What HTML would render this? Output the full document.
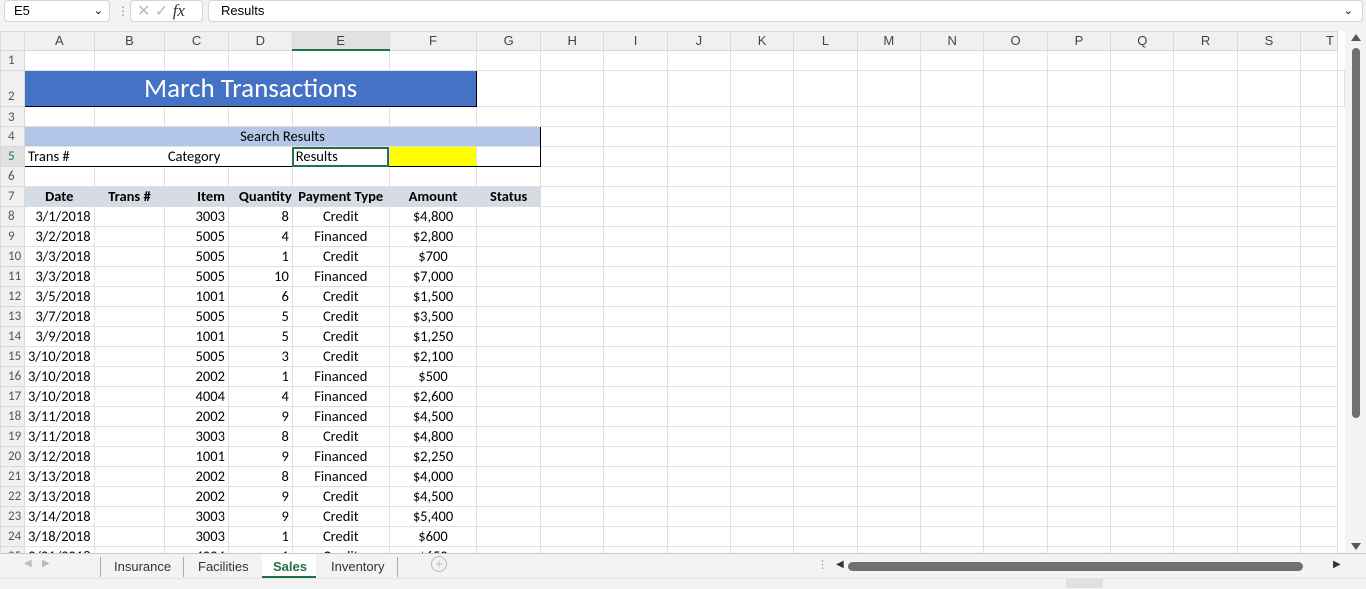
<!DOCTYPE html>
<html><head><style>
body{margin:0;width:1366px;height:588px;overflow:hidden;background:#f3f3f3;font-family:"Liberation Sans",Calibri,sans-serif;position:relative}
.fb{position:absolute;top:0;height:22px;background:#fff;border:1px solid #d6d6d6;border-radius:4px;box-sizing:border-box;font-size:13px;line-height:20px}
#grid{position:absolute;left:0;top:31px;width:1345px;height:522px;overflow:hidden;background:#fff}
table{border-collapse:collapse;table-layout:fixed;font-family:Carlito,"Liberation Sans",sans-serif;font-size:14.5px}
td{border:1px solid #e1e1e1;padding:0 3px;white-space:nowrap;overflow:hidden;height:19px;line-height:19px;color:#000}
tr.h td{background:#f0f0f0;text-align:center;color:#444;font-size:13px;border-color:#d9d9d9;height:17px;line-height:17px;font-family:"Liberation Sans",sans-serif}
td.rh{background:#f0f0f0;color:#555;font-size:13px;padding:0 0 0 7px;text-align:left;border-color:#d9d9d9;vertical-align:bottom}
.r{text-align:right}.c{text-align:center}
tr.hd td.d{background:#d6dce4;font-weight:bold;text-align:center;border-color:#d6dce4}
</style></head><body>
<div class="fb" style="left:4px;width:106px;padding-left:9px">E5<span style="position:absolute;right:6px;top:0;font-size:11px">&#8964;</span></div>
<div style="position:absolute;left:117px;top:4px;color:#888;font-size:12px">&#8942;</div>
<div class="fb" style="left:130px;width:73px;color:#bbb;font-size:16px;padding-left:6px">✕ ✓ <i style="color:#333;font-family:'Liberation Serif';font-size:17px">fx</i></div>
<div class="fb" style="left:208px;width:1155px;padding-left:12px">Results<span style="position:absolute;right:9px;top:0;font-size:11px">&#8964;</span></div>
<div id="grid"><table>
<colgroup><col style="width:24px"><col style="width:68px"><col style="width:71px"><col style="width:64px"><col style="width:64px"><col style="width:97px"><col style="width:88px"><col style="width:64px"><col span="12" style="width:64px"><col style="width:37px"></colgroup>
<tr class="h"><td style="background:#f0f0f0"></td><td>A</td><td>B</td><td>C</td><td>D</td><td style="background:#e1e1e1;border-bottom:2px solid #217346">E</td><td>F</td><td>G</td><td>H</td><td>I</td><td>J</td><td>K</td><td>L</td><td>M</td><td>N</td><td>O</td><td>P</td><td>Q</td><td>R</td><td>S</td><td style="text-align:right">T</td></tr>
<tr><td class="rh">1</td><td></td><td></td><td></td><td></td><td></td><td></td><td></td><td></td><td></td><td></td><td></td><td></td><td></td><td></td><td></td><td></td><td></td><td></td><td></td><td></td></tr>
<tr><td class="rh" style="height:35px">2</td><td colspan="6" style="background:#4472c4;color:#fff;font-size:27px;text-align:center;border:1px solid #000;height:35px;line-height:35px">March Transactions</td><td></td><td></td><td></td><td></td><td></td><td></td><td></td><td></td><td></td><td></td><td></td><td></td><td></td><td></td><td></td></tr>
<tr><td class="rh" style="height:17px;line-height:17px">3</td><td style="height:17px"></td><td></td><td></td><td></td><td></td><td></td><td></td><td></td><td></td><td></td><td></td><td></td><td></td><td></td><td></td><td></td><td></td><td></td><td></td><td></td></tr>
<tr><td class="rh">4</td><td colspan="7" style="background:#b4c6e7;text-align:center;border:1px solid #000;border-bottom:none">Search Results</td><td></td><td></td><td></td><td></td><td></td><td></td><td></td><td></td><td></td><td></td><td></td><td></td><td></td></tr>
<tr><td class="rh" style="background:#e1e1e1;color:#217346">5</td><td colspan="2" style="border-left:1px solid #000;border-bottom:1px solid #000;border-right:none">Trans #</td><td colspan="2" style="border-bottom:1px solid #000;border-left:none;border-right:none">Category</td><td style="outline:2px solid #217346;outline-offset:-2px;border-bottom:1px solid #000">Results</td><td style="background:#ffff00;border-bottom:1px solid #000"></td><td style="border-right:1px solid #000;border-bottom:1px solid #000"></td><td></td><td></td><td></td><td></td><td></td><td></td><td></td><td></td><td></td><td></td><td></td><td></td><td></td></tr>
<tr><td class="rh">6</td><td></td><td></td><td></td><td></td><td></td><td></td><td></td><td></td><td></td><td></td><td></td><td></td><td></td><td></td><td></td><td></td><td></td><td></td><td></td><td></td></tr>
<tr class="hd"><td class="rh">7</td><td class="d">Date</td><td class="d">Trans #</td><td class="d" style="text-align:right">Item</td><td class="d" style="text-align:right;padding:0">Quantity</td><td class="d">Payment Type</td><td class="d">Amount</td><td class="d">Status</td><td></td><td></td><td></td><td></td><td></td><td></td><td></td><td></td><td></td><td></td><td></td><td></td><td></td></tr>
<tr><td class="rh">8</td><td class="r">3/1/2018</td><td></td><td class="r">3003</td><td class="r">8</td><td class="c">Credit</td><td class="c">$4,800</td><td></td><td></td><td></td><td></td><td></td><td></td><td></td><td></td><td></td><td></td><td></td><td></td><td></td><td></td></tr>
<tr><td class="rh">9</td><td class="r">3/2/2018</td><td></td><td class="r">5005</td><td class="r">4</td><td class="c">Financed</td><td class="c">$2,800</td><td></td><td></td><td></td><td></td><td></td><td></td><td></td><td></td><td></td><td></td><td></td><td></td><td></td><td></td></tr>
<tr><td class="rh">10</td><td class="r">3/3/2018</td><td></td><td class="r">5005</td><td class="r">1</td><td class="c">Credit</td><td class="c">$700</td><td></td><td></td><td></td><td></td><td></td><td></td><td></td><td></td><td></td><td></td><td></td><td></td><td></td><td></td></tr>
<tr><td class="rh">11</td><td class="r">3/3/2018</td><td></td><td class="r">5005</td><td class="r">10</td><td class="c">Financed</td><td class="c">$7,000</td><td></td><td></td><td></td><td></td><td></td><td></td><td></td><td></td><td></td><td></td><td></td><td></td><td></td><td></td></tr>
<tr><td class="rh">12</td><td class="r">3/5/2018</td><td></td><td class="r">1001</td><td class="r">6</td><td class="c">Credit</td><td class="c">$1,500</td><td></td><td></td><td></td><td></td><td></td><td></td><td></td><td></td><td></td><td></td><td></td><td></td><td></td><td></td></tr>
<tr><td class="rh">13</td><td class="r">3/7/2018</td><td></td><td class="r">5005</td><td class="r">5</td><td class="c">Credit</td><td class="c">$3,500</td><td></td><td></td><td></td><td></td><td></td><td></td><td></td><td></td><td></td><td></td><td></td><td></td><td></td><td></td></tr>
<tr><td class="rh">14</td><td class="r">3/9/2018</td><td></td><td class="r">1001</td><td class="r">5</td><td class="c">Credit</td><td class="c">$1,250</td><td></td><td></td><td></td><td></td><td></td><td></td><td></td><td></td><td></td><td></td><td></td><td></td><td></td><td></td></tr>
<tr><td class="rh">15</td><td class="r">3/10/2018</td><td></td><td class="r">5005</td><td class="r">3</td><td class="c">Credit</td><td class="c">$2,100</td><td></td><td></td><td></td><td></td><td></td><td></td><td></td><td></td><td></td><td></td><td></td><td></td><td></td><td></td></tr>
<tr><td class="rh">16</td><td class="r">3/10/2018</td><td></td><td class="r">2002</td><td class="r">1</td><td class="c">Financed</td><td class="c">$500</td><td></td><td></td><td></td><td></td><td></td><td></td><td></td><td></td><td></td><td></td><td></td><td></td><td></td><td></td></tr>
<tr><td class="rh">17</td><td class="r">3/10/2018</td><td></td><td class="r">4004</td><td class="r">4</td><td class="c">Financed</td><td class="c">$2,600</td><td></td><td></td><td></td><td></td><td></td><td></td><td></td><td></td><td></td><td></td><td></td><td></td><td></td><td></td></tr>
<tr><td class="rh">18</td><td class="r">3/11/2018</td><td></td><td class="r">2002</td><td class="r">9</td><td class="c">Financed</td><td class="c">$4,500</td><td></td><td></td><td></td><td></td><td></td><td></td><td></td><td></td><td></td><td></td><td></td><td></td><td></td><td></td></tr>
<tr><td class="rh">19</td><td class="r">3/11/2018</td><td></td><td class="r">3003</td><td class="r">8</td><td class="c">Credit</td><td class="c">$4,800</td><td></td><td></td><td></td><td></td><td></td><td></td><td></td><td></td><td></td><td></td><td></td><td></td><td></td><td></td></tr>
<tr><td class="rh">20</td><td class="r">3/12/2018</td><td></td><td class="r">1001</td><td class="r">9</td><td class="c">Financed</td><td class="c">$2,250</td><td></td><td></td><td></td><td></td><td></td><td></td><td></td><td></td><td></td><td></td><td></td><td></td><td></td><td></td></tr>
<tr><td class="rh">21</td><td class="r">3/13/2018</td><td></td><td class="r">2002</td><td class="r">8</td><td class="c">Financed</td><td class="c">$4,000</td><td></td><td></td><td></td><td></td><td></td><td></td><td></td><td></td><td></td><td></td><td></td><td></td><td></td><td></td></tr>
<tr><td class="rh">22</td><td class="r">3/13/2018</td><td></td><td class="r">2002</td><td class="r">9</td><td class="c">Credit</td><td class="c">$4,500</td><td></td><td></td><td></td><td></td><td></td><td></td><td></td><td></td><td></td><td></td><td></td><td></td><td></td><td></td></tr>
<tr><td class="rh">23</td><td class="r">3/14/2018</td><td></td><td class="r">3003</td><td class="r">9</td><td class="c">Credit</td><td class="c">$5,400</td><td></td><td></td><td></td><td></td><td></td><td></td><td></td><td></td><td></td><td></td><td></td><td></td><td></td><td></td></tr>
<tr><td class="rh">24</td><td class="r">3/18/2018</td><td></td><td class="r">3003</td><td class="r">1</td><td class="c">Credit</td><td class="c">$600</td><td></td><td></td><td></td><td></td><td></td><td></td><td></td><td></td><td></td><td></td><td></td><td></td><td></td><td></td></tr>
<tr><td class="rh">25</td><td class="r">3/21/2018</td><td></td><td class="r">4004</td><td class="r">1</td><td class="c">Credit</td><td class="c">$650</td><td></td><td></td><td></td><td></td><td></td><td></td><td></td><td></td><td></td><td></td><td></td><td></td><td></td><td></td></tr>
</table></div>
<div style="position:absolute;left:1345px;top:31px;width:21px;height:522px;background:#f3f3f3"></div>
<div style="position:absolute;left:1351px;top:34px;width:0;height:0;border-left:5px solid transparent;border-right:5px solid transparent;border-bottom:7px solid #555"></div>
<div style="position:absolute;left:1352px;top:48px;width:8px;height:370px;background:#707070;border-radius:4px"></div>
<div style="position:absolute;left:1351px;top:543px;width:0;height:0;border-left:5px solid transparent;border-right:5px solid transparent;border-top:7px solid #555"></div>
<div style="position:absolute;left:0;top:553px;width:1366px;height:1px;background:#c8c8c8"></div>
<div style="position:absolute;left:0;top:554px;width:1366px;height:24px;background:#f3f3f3;font-size:13px;color:#333">
<span style="position:absolute;left:24px;top:4px;color:#bbb;font-size:10px">◀</span><span style="position:absolute;left:42px;top:4px;color:#bbb;font-size:10px">▶</span>
<div style="position:absolute;left:100px;top:3px;height:20px;border-left:1px solid #aaa"></div>
<span style="position:absolute;left:114px;top:5px">Insurance</span>
<div style="position:absolute;left:183px;top:3px;height:20px;border-left:1px solid #aaa"></div>
<span style="position:absolute;left:198px;top:5px">Facilities</span>
<div style="position:absolute;left:262px;top:0;width:54px;height:22px;background:#fff;border-bottom:2px solid #217346"></div>
<span style="position:absolute;left:273px;top:5px;color:#217346;font-weight:bold">Sales</span>
<span style="position:absolute;left:331px;top:5px">Inventory</span>
<div style="position:absolute;left:397px;top:3px;height:20px;border-left:1px solid #aaa"></div>
<span style="position:absolute;left:431px;top:2px;width:14px;height:14px;border:1px solid #bbb;border-radius:50%;color:#bbb;text-align:center;line-height:14px;font-size:13px">+</span>
<span style="position:absolute;left:817px;top:4px;color:#999;font-size:11px">⋮</span>
<span style="position:absolute;left:836px;top:5px;color:#333;font-size:10px">◀</span>
<div style="position:absolute;left:848px;top:8px;width:455px;height:9px;background:#707070;border-radius:5px"></div>
<span style="position:absolute;left:1333px;top:5px;color:#333;font-size:10px">▶</span>
</div>
<div style="position:absolute;left:0;top:578px;width:1366px;height:10px;background:#f3f3f3;border-top:1px solid #e4e4e4"></div>
<div style="position:absolute;left:1066px;top:579px;width:37px;height:9px;background:#e0e0e0"></div>
</body></html>
